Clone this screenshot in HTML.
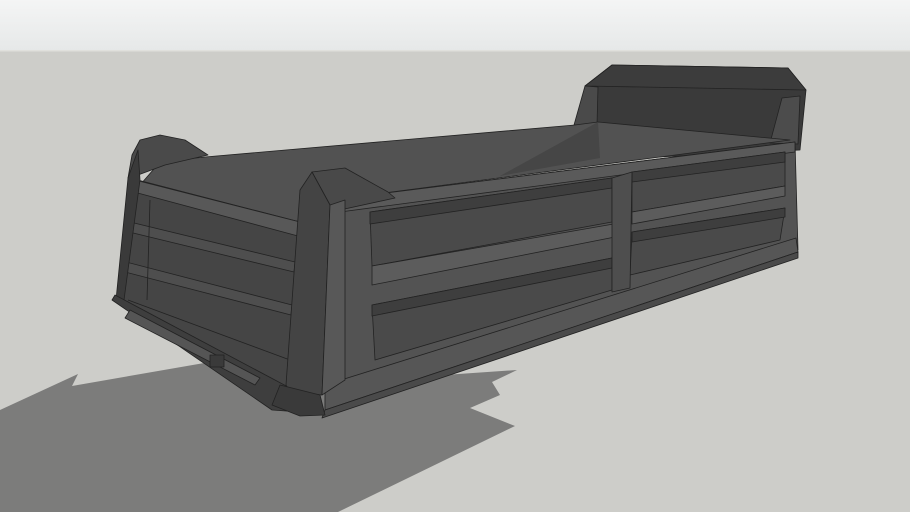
<!DOCTYPE html>
<html><head><meta charset="utf-8"><style>
html,body{margin:0;padding:0;width:910px;height:512px;overflow:hidden;background:#cdcdc9}
svg{display:block}
</style></head><body>
<svg width="910" height="512" viewBox="0 0 910 512" xmlns="http://www.w3.org/2000/svg">
<defs><linearGradient id="sky" x1="0" y1="0" x2="0" y2="1"><stop offset="0" stop-color="#f4f5f5"/><stop offset="1" stop-color="#e6e8e8"/></linearGradient></defs>
<rect width="910" height="512" fill="#cdcdc9"/>
<rect width="910" height="51" fill="url(#sky)"/>
<rect y="50" width="910" height="1.5" fill="#e0e0dc"/>
<polygon fill="#7c7c7b" points="0,410 78,374 72,386 210,362 300,385 517,370 492,382 500,395 470,408 515,426 338,512 0,512"/>
<g stroke="#222" stroke-width="0.8" stroke-linejoin="round">
<polygon fill="#3a3a3a" points="612,65 788,68 806,90 800,150 596,160 585,86"/>
<polygon fill="#3c3c3c" points="612,65 788,68 806,90 585,86"/>
<polygon fill="#4a4a4a" points="585,86 598,87 597,125 574,125"/>
<polygon fill="#4c4c4c" points="782,98 800,96 798,144 770,143"/>
<polygon fill="#525252" points="160,162 205,157 575,125 598,122 790,140 330,200 300,222 140,185"/>
<polygon fill="#464646" stroke="none" points="500,176 598,122 600,158"/>
<polygon fill="#454545" points="130,178 300,222 290,392 118,302"/>
<polygon fill="#585858" points="135,180 300,222 298,236 134,192"/>
<polygon fill="#4e4e4e" points="130,222 295,262 294,272 129,232"/>
<polygon fill="#4e4e4e" points="126,262 292,305 291,315 125,272"/>
<line x1="128" y1="300" x2="290" y2="360"/>
<line x1="150" y1="200" x2="147" y2="300"/>
<polygon fill="#4a4a4a" points="140,140 160,135 185,140 208,155 165,165 138,175 128,178 132,155"/>
<polygon fill="#3a3a3a" points="128,178 138,150 140,180 124,300 116,300"/>
<polygon fill="#3e3e3e" points="115,295 290,388 300,412 272,410 112,300"/>
<polygon fill="#555" points="130,310 260,378 255,385 125,318"/>
<rect x="210" y="355" width="14" height="12" fill="#3a3a3a"/>
<polygon fill="#535353" points="330,200 795,142 798,250 325,410"/>
<polygon fill="#5a5a5a" points="330,200 795,142 795,152 340,212"/>
<polygon fill="#4a4a4a" points="370,212 612,178 612,222 372,266"/>
<polygon fill="#3e3e3e" points="370,212 612,178 612,188 370,224"/>
<polygon fill="#5c5c5c" points="372,266 625,222 625,235 372,285"/>
<polygon fill="#4a4a4a" points="632,172 785,152 785,186 632,212"/>
<polygon fill="#3e3e3e" points="632,172 785,152 785,162 632,182"/>
<polygon fill="#5c5c5c" points="632,212 785,186 785,196 632,224"/>
<polygon fill="#4a4a4a" points="372,305 612,258 612,290 375,360"/>
<polygon fill="#3e3e3e" points="372,305 612,258 612,268 372,316"/>
<polygon fill="#4a4a4a" points="632,232 785,208 780,240 630,275"/>
<polygon fill="#3e3e3e" points="632,232 785,208 785,217 632,242"/>
<polygon fill="#4e4e4e" points="612,178 632,172 630,288 612,292"/>
<polygon fill="#565656" points="325,385 796,238 798,252 325,410"/>
<polygon fill="#4a4a4a" points="325,410 798,252 798,258 322,418"/>
<polygon fill="#494949" points="312,172 345,168 388,192 395,198 340,210 330,205"/>
<polygon fill="#444" points="300,190 312,172 330,205 322,395 290,392 286,385"/>
<polygon fill="#585858" points="330,205 345,200 345,380 322,395"/>
<polygon fill="#3a3a3a" points="280,385 320,395 325,415 300,416 272,405"/>
</g>
</svg>
</body></html>
